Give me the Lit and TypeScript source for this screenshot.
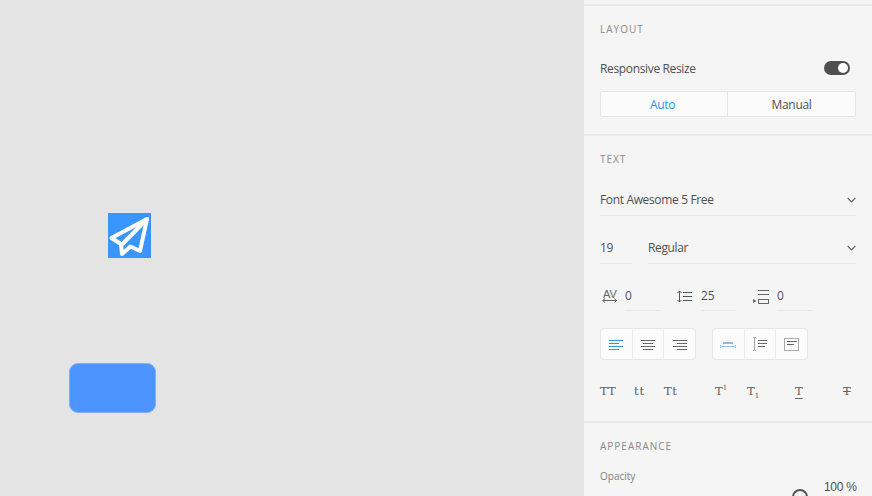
import { LitElement, html, css, svg } from "lit";
import { customElement } from "lit/decorators.js";

const chevron = html`<svg class="chev" width="9" height="6" viewBox="0 0 9 6"><path d="M.7 1l3.800 3.800L8.300 1" fill="none" stroke="#666" stroke-width="1.200"/></svg>`;

const ico = (w: number, h: number, body: unknown) =>
  html`<svg width="${w}" height="${h}" viewBox="0 0 ${w} ${h}" fill="none">${body}</svg>`;

const lines = (rows: [number, number, number][], color: string) =>
  rows.map(([x1, x2, y]) => svg`<path d="M${x1} ${y}.5H${x2}" stroke="${color}"/>`);

@customElement("app-root")
export class AppRoot extends LitElement {
  static styles = css`
    :host { display: flex; width: 872px; height: 496px; overflow: hidden; font-family: "Open Sans", "Noto Sans", sans-serif; }
    .canvas { position: relative; width: 584px; height: 496px; background: #e4e4e4; flex: none; }
    .plane { position: absolute; left: 108px; top: 213px; width: 43px; height: 45px; background: #3a96ff; }
    .rect { position: absolute; left: 69px; top: 363px; width: 87px; height: 50px; box-sizing: border-box; background: #4d94ff; border: 1px solid #80aef8; border-radius: 9px; }
    .panel { flex: 1; background: #f5f5f5; padding-top: 4px; color: #505050; font-size: 12px; overflow: hidden; }
    section { border-top: 2px solid #e9e9e9; padding: 0 16px; box-sizing: border-box; }
    .s1 { height: 130px; }
    .s2 { height: 287px; }
    h2 { margin: 0; font-size: 10px; font-weight: 400; letter-spacing: 1px; color: #8a8a8a; line-height: 14px; padding-top: 16px; height: 30px; box-sizing: content-box; }
    .s2 h2 { padding-top: 16px; height: 32px; }
    .resp { display: flex; justify-content: space-between; align-items: center; height: 30px; padding-top: 1px; letter-spacing: -.35px; }
    .toggle { width: 26px; height: 14px; border-radius: 7px; background: #4f4f4f; margin-right: 6px; position: relative; display: block; }
    .toggle::after { content: ""; position: absolute; right: 2px; top: 2px; width: 10px; height: 10px; border-radius: 50%; background: #fff; }
    .seg { display: flex; height: 26px; margin-top: 8px; box-sizing: border-box; border: 1px solid #e4e4e4; border-radius: 2px; background: #fbfbfb; }
    .seg span { display: flex; align-items: center; justify-content: center; letter-spacing: -.35px; }
    .seg .a { width: 127px; box-sizing: border-box; padding-right: 3px; color: #2d96e6; border-right: 1px solid #e4e4e4; }
    .seg .m { flex: 1; }
    .sel { display: flex; align-items: center; justify-content: space-between; height: 32px; border-bottom: 1px solid #e6e6e6; box-sizing: border-box; letter-spacing: -.35px; }
    .chev { flex: none; }
    .r2 { display: flex; gap: 16px; margin-top: 16px; }
    .r2 .n { width: 32px; }
    .r2 .w { flex: 1; }
    .metrics { display: flex; margin-top: 16px; height: 31px; align-items: stretch; }
    .metric { display: flex; width: 76px; }
    .metric .i { width: 25px; padding-left: 1px; box-sizing: border-box; display: flex; align-items: center; }
    .metric .v { width: 35px; border-bottom: 1px solid #e6e6e6; display: flex; align-items: center; }
    .btns { display: flex; gap: 16px; margin-top: 17px; }
    .grp { display: flex; width: 96px; height: 32px; box-sizing: border-box; border: 1px solid #e6e6e6; border-radius: 4px; background: #fbfbfb; }
    .grp span { flex: 1; display: flex; align-items: center; justify-content: center; border-left: 1px solid #eaeaea; }
    .grp span:first-child { border-left: 0; }
    .styles { display: flex; margin-top: 22px; height: 18px; font-family: "DejaVu Serif", serif; font-size: 11.500px; color: #606060; align-items: center; }
    .styles span { line-height: 16px; flex: none; }
    .styles sup, .styles sub { font-size: 7px; line-height: 0; }
    .styles u { text-underline-offset: 3px; }
    .styles s { text-decoration-thickness: 1px; }
    .w34 { width: 34px; }
    .w30 { width: 30px; letter-spacing: 1px; }
    .w51 { width: 51px; letter-spacing: .5px; }
    .w32 { width: 32px; }
    .w48 { width: 48px; }
    .s3 h2 { height: 30px; padding-top: 16px; }
    .op { display: flex; justify-content: space-between; font-size: 10px; color: #808080; line-height: 14px; position: relative; height: 30px; }
    .pct { font-size: 12px; letter-spacing: -.3px; color: #505050; position: absolute; left: 224px; top: 11px; white-space: nowrap; font-family: "Liberation Sans", sans-serif; }
    .knob { position: absolute; left: 192px; top: 20px; width: 16px; height: 16px; box-sizing: border-box; border: 2px solid #555; border-radius: 50%; background: #f5f5f5; }
  `;

  render() {
    return html`
      <div class="canvas">
        <div class="plane">
          <svg width="43" height="45" viewBox="0 0 43 45" fill="none" stroke="#fff" stroke-width="4" stroke-linejoin="round" stroke-linecap="round">
            <path d="M39 6L3.500 25l9.500 6 1 10 8.500-7.500L32 38z"/>
            <path d="M39 6L14.500 31"/>
          </svg>
        </div>
        <div class="rect"></div>
      </div>
      <div class="panel">
        <section class="s1">
          <h2>LAYOUT</h2>
          <div class="resp">Responsive Resize<i class="toggle"></i></div>
          <div class="seg"><span class="a">Auto</span><span class="m">Manual</span></div>
        </section>
        <section class="s2">
          <h2>TEXT</h2>
          <div class="sel">Font Awesome 5 Free ${chevron}</div>
          <div class="r2">
            <div class="sel n">19</div>
            <div class="sel w">Regular ${chevron}</div>
          </div>
          <div class="metrics">
            <div class="metric">
              <div class="i">${ico(17, 14, svg`<text x="2" y="8.500" font-size="11" font-family="Liberation Sans" fill="#666" stroke="none">AV</text><path d="M1.500 11.500H16M4 9.500L1.800 11.500 4 13.500M13.500 9.500L15.700 11.500 13.500 13.500" stroke="#666"/>`)}</div>
              <div class="v">0</div>
            </div>
            <div class="metric">
              <div class="i">${ico(16, 14, svg`<path d="M2.500 2V13M.5 4L2.500 2 4.500 4M.5 11L2.500 13 4.500 11" stroke="#555"/>${lines([[6, 15, 3], [6, 15, 7], [6, 15, 11]], "#555")}`)}</div>
              <div class="v">25</div>
            </div>
            <div class="metric">
              <div class="i">${ico(17, 16, svg`<path d="M0 11L3.500 13 0 15z" fill="#666"/>${lines([[5, 16, 2], [5, 16, 6]], "#666")}<rect x="5.500" y="11.500" width="10" height="4" stroke="#666"/>`)}</div>
              <div class="v">0</div>
            </div>
          </div>
          <div class="btns">
            <div class="grp">
              <span>${ico(14, 11, lines([[0, 14, 1], [0, 10, 4], [0, 14, 7], [0, 10, 10]], "#2d96e6"))}</span>
              <span>${ico(14, 11, lines([[0, 14, 1], [2, 12, 4], [0, 14, 7], [2, 12, 10]], "#666"))}</span>
              <span>${ico(14, 11, lines([[0, 14, 1], [4, 14, 4], [0, 14, 7], [4, 14, 10]], "#666"))}</span>
            </div>
            <div class="grp">
              <span>${ico(16, 8, svg`<path d="M3 3H13" stroke="#2d96e6" stroke-width="1.200"/><path d="M.5 5V8M15.500 5V8M.5 6.500H15.500" stroke="#8ccaf5"/>`)}</span>
              <span>${ico(15, 14, svg`<path d="M0 .5H3M0 13.500H3M1.500 .5V13.500" stroke="#aaa"/>${lines([[5, 14, 3], [5, 14, 6], [5, 12, 9]], "#666")}`)}</span>
              <span>${ico(15, 13, svg`<rect x=".5" y=".5" width="14" height="12" stroke="#aaa"/>${lines([[3, 13, 3], [3, 10, 6]], "#666")}`)}</span>
            </div>
          </div>
          <div class="styles">
            <span class="w34">TT</span>
            <span class="w30">tt</span>
            <span class="w51">Tt</span>
            <span class="w32">T<sup>1</sup></span>
            <span class="w48">T<sub>1</sub></span>
            <span class="w48"><u>T</u></span>
            <span><s>T</s></span>
          </div>
        </section>
        <section class="s3">
          <h2>APPEARANCE</h2>
          <div class="op">Opacity<i class="knob"></i><span class="pct">100 %</span></div>
        </section>
      </div>
    `;
  }
}
